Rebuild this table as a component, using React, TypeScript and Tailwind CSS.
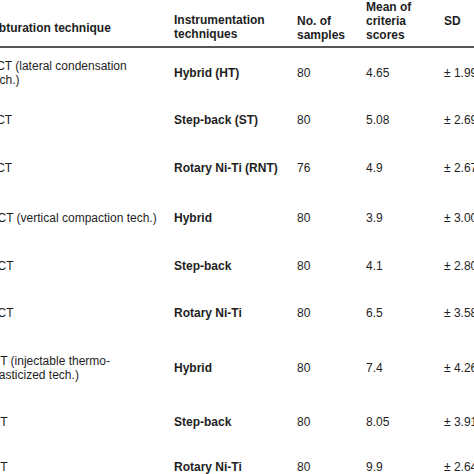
import React from "react";

type Row = {
  obturation: React.ReactNode;
  instrument: string;
  samples: string;
  mean: string;
  sd: string;
  height: string;
};

const rows: Row[] = [
  {
    obturation: (
      <>
        LCT (lateral condensation
        <br />
        tech.)
      </>
    ),
    instrument: "Hybrid (HT)",
    samples: "80",
    mean: "4.65",
    sd: "± 1.99",
    height: "h-[50px]",
  },
  { obturation: "LCT", instrument: "Step-back (ST)", samples: "80", mean: "5.08", sd: "± 2.69", height: "h-[44px]" },
  { obturation: "LCT", instrument: "Rotary Ni-Ti (RNT)", samples: "76", mean: "4.9", sd: "± 2.67", height: "h-[52px]" },
  {
    obturation: "VCT (vertical compaction tech.)",
    instrument: "Hybrid",
    samples: "80",
    mean: "3.9",
    sd: "± 3.00",
    height: "h-[48px]",
  },
  { obturation: "VCT", instrument: "Step-back", samples: "80", mean: "4.1", sd: "± 2.80", height: "h-[48px]" },
  { obturation: "VCT", instrument: "Rotary Ni-Ti", samples: "80", mean: "6.5", sd: "± 3.58", height: "h-[46px]" },
  {
    obturation: (
      <>
        ITT (injectable thermo-
        <br />
        plasticized tech.)
      </>
    ),
    instrument: "Hybrid",
    samples: "80",
    mean: "7.4",
    sd: "± 4.26",
    height: "h-[64px]",
  },
  { obturation: "ITT", instrument: "Step-back", samples: "80", mean: "8.05", sd: "± 3.91", height: "h-[44px]" },
  { obturation: "ITT", instrument: "Rotary Ni-Ti", samples: "80", mean: "9.9", sd: "± 2.64", height: "h-[46px]" },
];

const cols = "grid grid-cols-[184.5px_123px_69px_78px_120px]";

export default function App() {
  return (
    <div
      className="w-[474px] h-[474px] overflow-hidden bg-white text-[#1e1e1e] text-[12px] leading-[14px]"
      style={{ fontFamily: '"Liberation Sans", Arial, sans-serif' }}
    >
      <div className="ml-[-10.5px] w-[600px]">
        {/* Header */}
        <div className={`${cols} h-[48px] border-b-2 border-[#555] font-bold`}>
          <div className="pt-[21px]">Obturation technique</div>
          <div className="pt-[13px]">
            Instrumentation
            <br />
            techniques
          </div>
          <div className="pt-[14px]">
            No. of
            <br />
            samples
          </div>
          <div className="pt-0">
            Mean of
            <br />
            criteria
            <br />
            scores
          </div>
          <div className="pt-[14px]">SD</div>
        </div>

        {/* Body */}
        {rows.map((r, i) => (
          <div key={i} className={`${cols} ${r.height} items-center`}>
            <div>{r.obturation}</div>
            <div className="font-bold">{r.instrument}</div>
            <div>{r.samples}</div>
            <div>{r.mean}</div>
            <div>{r.sd}</div>
          </div>
        ))}
      </div>
    </div>
  );
}
